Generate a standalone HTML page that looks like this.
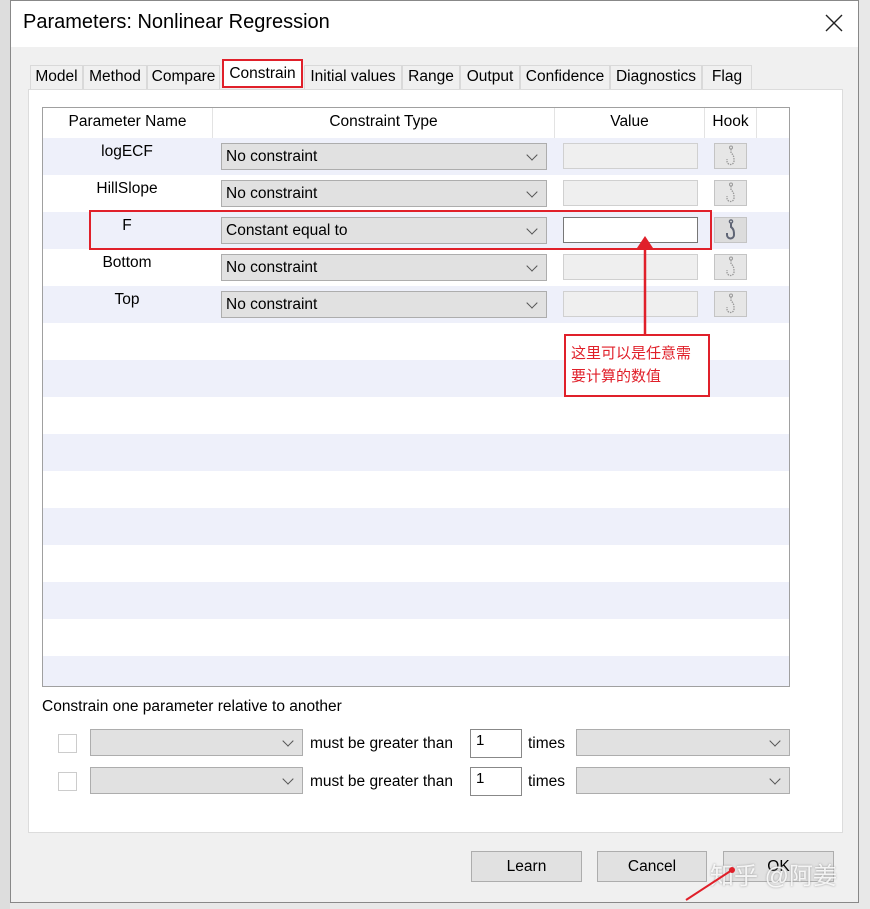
<!DOCTYPE html>
<html><head><meta charset="utf-8">
<style>
*{box-sizing:border-box;margin:0;padding:0}
body{width:870px;height:909px;overflow:hidden;background:#e8e8e8;font-family:"Liberation Sans","Noto Sans CJK SC",sans-serif;font-size:15px;color:#000;position:relative}
.abs{position:absolute}
.dlg{left:10px;top:0;width:849px;height:903px;background:#f0f0f0;border:1px solid #888;}
.title{left:0;top:0;width:847px;height:46px;background:#fff}
.tab{top:65px;height:24px;border:1px solid #d9d9d9;border-bottom:none;background:#f0f0f0;font-size:15.5px;text-align:center;line-height:22px}
.panel{left:17px;top:88px;width:815px;height:744px;background:#fff;border:1px solid #dcdcdc}
.tbl{left:42px;top:107px;width:748px;height:580px;border:1px solid #a0a0a0;background:#fff;overflow:hidden}
.stripe{left:0;width:746px;height:37px;background:#eef0fa}
.hdr{top:0;height:30px;line-height:28px;text-align:center;font-size:15.5px;border-right:1px solid #e3e3e3}
.nm{width:170px;text-align:center;font-size:15.5px}
.sel{width:326px;height:27px;background:#e1e1e1;border:1px solid #adadad;font-size:15.5px;line-height:25px;padding-left:4px}
.sel:after{content:"";position:absolute;right:10px;top:7px;width:7px;height:7px;border-right:1px solid #555;border-bottom:1px solid #555;transform:rotate(45deg)}
.val{width:135px;height:26px;background:#efefef;border:1px solid #d0d0d0}
.hook{width:33px;height:26px;background:#e6e6e6;border:1px solid #c4c4c4}
.btn{top:851px;height:31px;background:#e1e1e1;border:1px solid #adadad;text-align:center;line-height:29px;font-size:15.5px}
.red{border:2px solid #e0202a}
</style></head><body>
<div class="abs" style="left:0;top:0;width:10px;height:909px;background:#ddd"></div>
<div class="abs dlg">
 <div class="abs title"></div>
 <div class="abs" style="left:12px;top:10px;font-size:20px">Parameters: Nonlinear Regression</div>
 <svg class="abs" style="left:814px;top:13px" width="18" height="18"><path d="M1 1L17 17M17 1L1 17" stroke="#222" stroke-width="1.4"/></svg>
 <div class="abs panel"></div>
</div>
<div class="abs tab" style="left:30px;width:53px">Model</div>
<div class="abs tab" style="left:83px;width:64px">Method</div>
<div class="abs tab" style="left:147px;width:73px">Compare</div>
<div class="abs tab red" style="left:222px;top:59px;width:81px;height:29px;background:#fff;line-height:26px">Constrain</div>
<div class="abs tab" style="left:304px;width:98px">Initial values</div>
<div class="abs tab" style="left:402px;width:58px">Range</div>
<div class="abs tab" style="left:460px;width:60px">Output</div>
<div class="abs tab" style="left:520px;width:90px">Confidence</div>
<div class="abs tab" style="left:610px;width:92px">Diagnostics</div>
<div class="abs tab" style="left:702px;width:50px">Flag</div>

<div class="abs tbl">
 <div class="abs stripe" style="top:30px"></div>
 <div class="abs stripe" style="top:104px"></div>
 <div class="abs stripe" style="top:178px"></div>
 <div class="abs stripe" style="top:252px"></div>
 <div class="abs stripe" style="top:326px"></div>
 <div class="abs stripe" style="top:400px"></div>
 <div class="abs stripe" style="top:474px"></div>
 <div class="abs stripe" style="top:548px"></div>
 <div class="abs hdr" style="left:0;width:170px">Parameter Name</div>
 <div class="abs hdr" style="left:170px;width:342px">Constraint Type</div>
 <div class="abs hdr" style="left:512px;width:150px">Value</div>
 <div class="abs hdr" style="left:662px;width:52px">Hook</div>
</div>

<div class="abs nm" style="left:42px;top:143px">logECF</div>
<div class="abs nm" style="left:42px;top:180px">HillSlope</div>
<div class="abs nm" style="left:42px;top:217px">F</div>
<div class="abs nm" style="left:42px;top:254px">Bottom</div>
<div class="abs nm" style="left:42px;top:291px">Top</div>

<div class="abs sel" style="left:221px;top:143px">No constraint</div>
<div class="abs sel" style="left:221px;top:180px">No constraint</div>
<div class="abs sel" style="left:221px;top:217px">Constant equal to</div>
<div class="abs sel" style="left:221px;top:254px">No constraint</div>
<div class="abs sel" style="left:221px;top:291px">No constraint</div>

<div class="abs val" style="left:563px;top:143px"></div>
<div class="abs val" style="left:563px;top:180px"></div>
<div class="abs val" style="left:563px;top:217px;background:#fff;border-color:#777"></div>
<div class="abs val" style="left:563px;top:254px"></div>
<div class="abs val" style="left:563px;top:291px"></div>

<div class="abs hook" style="left:714px;top:143px"><svg width="31" height="24"><circle cx="16" cy="3.5" r="1.5" fill="none" stroke="#999"/><path d="M16 5v4c3 2 3 5 3 8a3.5 3.5 0 0 1-7 0v-2" fill="none" stroke="#999" stroke-width="1.3" stroke-dasharray="1.5 1"/></svg></div>
<div class="abs hook" style="left:714px;top:180px"><svg width="31" height="24"><circle cx="16" cy="3.5" r="1.5" fill="none" stroke="#999"/><path d="M16 5v4c3 2 3 5 3 8a3.5 3.5 0 0 1-7 0v-2" fill="none" stroke="#999" stroke-width="1.3" stroke-dasharray="1.5 1"/></svg></div>
<div class="abs hook" style="left:714px;top:217px;background:#dcdcdc"><svg width="31" height="24"><circle cx="16" cy="3.5" r="1.6" fill="none" stroke="#5f6575" stroke-width="1.4"/><path d="M16 5v4c3 2 3 5 3 8a3.5 3.5 0 0 1-7 0v-2" fill="none" stroke="#5f6575" stroke-width="2"/></svg></div>
<div class="abs hook" style="left:714px;top:254px"><svg width="31" height="24"><circle cx="16" cy="3.5" r="1.5" fill="none" stroke="#999"/><path d="M16 5v4c3 2 3 5 3 8a3.5 3.5 0 0 1-7 0v-2" fill="none" stroke="#999" stroke-width="1.3" stroke-dasharray="1.5 1"/></svg></div>
<div class="abs hook" style="left:714px;top:291px"><svg width="31" height="24"><circle cx="16" cy="3.5" r="1.5" fill="none" stroke="#999"/><path d="M16 5v4c3 2 3 5 3 8a3.5 3.5 0 0 1-7 0v-2" fill="none" stroke="#999" stroke-width="1.3" stroke-dasharray="1.5 1"/></svg></div>

<div class="abs red" style="left:89px;top:210px;width:623px;height:40px"></div>
<svg class="abs" style="left:630px;top:232px" width="30" height="105"><path d="M15 12V103" stroke="#e0202a" stroke-width="2.5"/><path d="M7 16L15 4L23 16Z" fill="#e0202a"/></svg>
<div class="abs red" style="left:564px;top:334px;width:146px;height:63px;background:#fff;color:#e0202a;font-size:15px;line-height:23px;padding:6px 0 0 5px">这里可以是任意需<br>要计算的数值</div>

<div class="abs" style="left:42px;top:698px;font-size:15.5px">Constrain one parameter relative to another</div>
<div class="abs" style="left:58px;top:734px;width:19px;height:19px;background:#fff;border:1px solid #ccc"></div>
<div class="abs sel" style="left:90px;top:729px;width:213px"></div>
<div class="abs" style="left:310px;top:735px;font-size:15.5px">must be greater than</div>
<div class="abs" style="left:470px;top:729px;width:52px;height:29px;border:1px solid #888;background:#fff;padding:2px 5px;font-size:15px">1</div>
<div class="abs" style="left:528px;top:735px;font-size:15.5px">times</div>
<div class="abs sel" style="left:576px;top:729px;width:214px"></div>

<div class="abs" style="left:58px;top:772px;width:19px;height:19px;background:#fff;border:1px solid #ccc"></div>
<div class="abs sel" style="left:90px;top:767px;width:213px"></div>
<div class="abs" style="left:310px;top:773px;font-size:15.5px">must be greater than</div>
<div class="abs" style="left:470px;top:767px;width:52px;height:29px;border:1px solid #888;background:#fff;padding:2px 5px;font-size:15px">1</div>
<div class="abs" style="left:528px;top:773px;font-size:15.5px">times</div>
<div class="abs sel" style="left:576px;top:767px;width:214px"></div>

<div class="abs btn" style="left:471px;width:111px">Learn</div>
<div class="abs btn" style="left:597px;width:110px">Cancel</div>
<div class="abs btn" style="left:723px;width:111px">OK</div>
<div class="abs" style="left:710px;top:856px;font-size:24px;color:rgba(255,255,255,.85);text-shadow:0 0 2px #999">知乎 @阿姜</div>
<svg class="abs" style="left:680px;top:862px" width="60" height="40"><path d="M6 38L52 8" stroke="#e0202a" stroke-width="2"/><circle cx="52" cy="8" r="3" fill="#e0202a"/></svg>
</body></html>
